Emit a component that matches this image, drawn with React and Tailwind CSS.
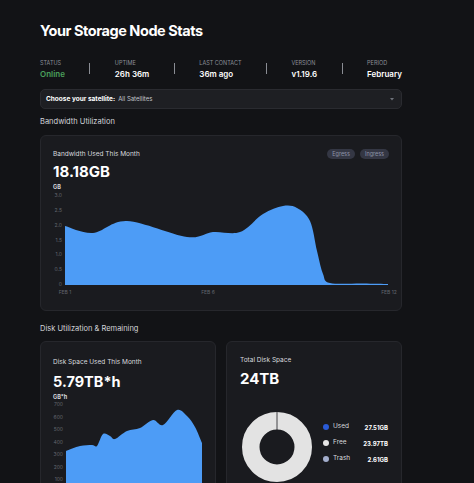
import React from "react"

const smooth = (pts) => {
  let d = `M${pts[0][0]},${pts[0][1]}`
  for (let i = 0; i < pts.length - 1; i++) {
    const p0 = pts[i - 1] || pts[i]
    const p1 = pts[i]
    const p2 = pts[i + 1]
    const p3 = pts[i + 2] || p2
    const c1x = p1[0] + (p2[0] - p0[0]) / 6
    const c1y = p1[1] + (p2[1] - p0[1]) / 6
    const c2x = p2[0] - (p3[0] - p1[0]) / 6
    const c2y = p2[1] - (p3[1] - p1[1]) / 6
    d += ` C${c1x},${c1y} ${c2x},${c2y} ${p2[0]},${p2[1]}`
  }
  return d
}

const bandwidthPts = [
  [12, 34], [40, 41], [74, 29], [134, 45], [160, 40], [187, 40], [210, 22],
  [230, 14], [244, 16], [257, 29], [264, 59], [270, 82], [277, 91], [310, 91.5], [335, 92],
]

const diskPts = [
  [13, 50], [27, 45], [39, 44], [44, 45], [50, 33], [57, 35], [62, 38], [74, 30],
  [87, 27], [100, 19], [110, 24], [124, 9], [134, 15], [142, 26], [149, 42],
]

const stats = [
  { label: "STATUS", value: "Online", green: true },
  { label: "UPTIME", value: "26h 36m" },
  { label: "LAST CONTACT", value: "36m ago" },
  { label: "VERSION", value: "v1.19.6" },
  { label: "PERIOD", value: "February" },
]

const BandwidthChart = () => {
  const yLabels = [["3.0", 4], ["2.5", 19], ["2.0", 34], ["1.5", 49], ["1.0", 63], ["0.5", 78], ["0", 93]]
  return (
    <svg width="336" height="105" viewBox="0 0 336 105" className="overflow-visible block">
      <path d={`${smooth(bandwidthPts)} L335,93 L12,93 Z`} fill="#4d9cf6" />
      {yLabels.map(([t, y]) => (
        <text key={t} x="9" y={y} fontSize="5" fill="#62666f" textAnchor="end" dominantBaseline="middle">
          {t}
        </text>
      ))}
      <text x="12" y="101" fontSize="5" fill="#62666f" textAnchor="middle" dominantBaseline="middle">FEB 1</text>
      <text x="155" y="101" fontSize="5" fill="#62666f" textAnchor="middle" dominantBaseline="middle">FEB 6</text>
      <text x="336" y="101" fontSize="5" fill="#62666f" textAnchor="middle" dominantBaseline="middle">FEB 12</text>
    </svg>
  )
}

const DiskChart = () => {
  const yLabels = [["700", 4], ["600", 16.5], ["500", 29], ["400", 41.5], ["300", 54], ["200", 66.5], ["100", 79], ["0", 91.5]]
  return (
    <svg width="150" height="106" viewBox="0 0 150 106" className="overflow-visible block">
      <path d={`${smooth(diskPts)} L149,91.5 L13,91.5 Z`} fill="#4d9cf6" />
      {yLabels.map(([t, y]) => (
        <text key={t} x="10" y={y} fontSize="5" fill="#62666f" textAnchor="end" dominantBaseline="middle">
          {t}
        </text>
      ))}
    </svg>
  )
}

const Donut = () => (
  <svg width="70" height="70" viewBox="0 0 70 70" className="block shrink-0">
    <circle cx="35" cy="35" r="26.25" fill="none" stroke="#e3e3e3" strokeWidth="17.5" />
    <line x1="35" y1="0" x2="35" y2="18" stroke="#1a1b1f" strokeWidth="0.8" />
  </svg>
)

export default function App() {
  return (
    <div
      className="min-h-screen w-full bg-[#121316] text-white pb-10"
      style={{ fontFamily: "Inter, 'Noto Sans', sans-serif" }}
    >
      <div className="w-[362px] ml-[40px] pt-[21px]">
        <h1 className="text-[14.5px] leading-[20px] font-bold tracking-[-0.45px]">Your Storage Node Stats</h1>

        <div className="mt-[19px] flex items-center justify-between">
          {stats.map((s, i) => (
            <React.Fragment key={s.label}>
              {i > 0 && <div className="w-px h-[11px] bg-[#8a8d94] -mt-[3px]" />}
              <div className="flex flex-col">
                <span className="text-[5.5px] leading-[7px] text-[#8b8f98] uppercase">{s.label}</span>
                <span
                  className={`mt-[2px] text-[8px] leading-[10px] font-semibold ${
                    s.green ? "text-[#4a9f5c]" : "text-white"
                  }`}
                >
                  {s.value}
                </span>
              </div>
            </React.Fragment>
          ))}
        </div>

        <div className="mt-[10px] h-[20px] rounded-[5px] bg-[#1e1f23] border border-[#2a2b30] flex items-center justify-between pl-[5px] pr-[7px]">
          <div className="flex items-baseline leading-[8px]">
            <span className="text-[6.5px] font-bold text-white">Choose your satellite:</span>
            <span className="ml-[3px] text-[6px] text-[#c4c6cc]">All Satellites</span>
          </div>
          <svg width="4" height="3" viewBox="0 0 4 3">
            <path d="M0 0 L4 0 L2 2.5 Z" fill="#6f737b" />
          </svg>
        </div>

        <div className="mt-[8px] text-[7.5px] leading-[10px] text-[#d4d6da]">Bandwidth Utilization</div>

        <div className="mt-[8px] rounded-[6px] bg-[#1a1b1f] border border-[#26272c] pl-[12px] pr-[12px] pt-[13px] pb-[13px]">
          <div className="flex items-center justify-between h-[10px]">
            <span className="text-[6.5px] leading-[8px] text-[#d8dade]">Bandwidth Used This Month</span>
            <div className="flex gap-[5px]">
              <span className="h-[10px] px-[5px] rounded-full bg-[#343744] text-[5.5px] leading-[10px] text-[#8e94a8]">
                Egress
              </span>
              <span className="h-[10px] px-[5px] rounded-full bg-[#343744] text-[5.5px] leading-[10px] text-[#8e94a8]">
                Ingress
              </span>
            </div>
          </div>
          <div className="mt-[4px] text-[15px] leading-[18px] font-bold">18.18GB</div>
          <div className="mt-[3px] text-[5.5px] leading-[7px] font-bold text-[#d8dade]">GB</div>
          <div className="mt-[1px]">
            <BandwidthChart />
          </div>
        </div>

        <div className="mt-[13px] text-[7.5px] leading-[10px] text-[#d4d6da]">Disk Utilization &amp; Remaining</div>

        <div className="mt-[7px] grid grid-cols-2 gap-[10px]">
          <div className="rounded-[6px] bg-[#1a1b1f] border border-[#26272c] pl-[12px] pr-[12px] pt-[16px] pb-[14px]">
            <div className="text-[6.5px] leading-[8px] text-[#d8dade]">Disk Space Used This Month</div>
            <div className="mt-[7px] text-[14.5px] leading-[18px] font-bold">5.79TB*h</div>
            <div className="mt-[2.5px] text-[5.5px] leading-[7px] font-bold text-[#d8dade]">GB*h</div>
            <div className="mt-[0.5px]">
              <DiskChart />
            </div>
          </div>

          <div className="rounded-[6px] bg-[#1a1b1f] border border-[#26272c] pl-[13px] pr-[13px] pt-[14px] pb-[14px]">
            <div className="text-[6.5px] leading-[8px] text-[#d8dade]">Total Disk Space</div>
            <div className="mt-[6px] text-[15px] leading-[18px] font-bold">24TB</div>
            <div className="mt-[24px] flex items-center pl-[2px]">
              <Donut />
              <div className="ml-[11px] flex-1 flex flex-col gap-[8px] -mt-[8px]">
                {[
                  ["Used", "27.51GB", "#2a5bd7"],
                  ["Free", "23.97TB", "#e6e6e6"],
                  ["Trash", "2.61GB", "#a3aecd"],
                ].map(([name, val, c]) => (
                  <div key={name} className="flex items-center h-[8px]">
                    <span className="w-[6px] h-[6px] rounded-full" style={{ backgroundColor: c }} />
                    <span className="ml-[4px] text-[6.5px] text-[#d8dade]">{name}</span>
                    <span className="ml-auto text-[6px] font-bold text-white">{val}</span>
                  </div>
                ))}
              </div>
            </div>
          </div>
        </div>
      </div>
    </div>
  )
}
